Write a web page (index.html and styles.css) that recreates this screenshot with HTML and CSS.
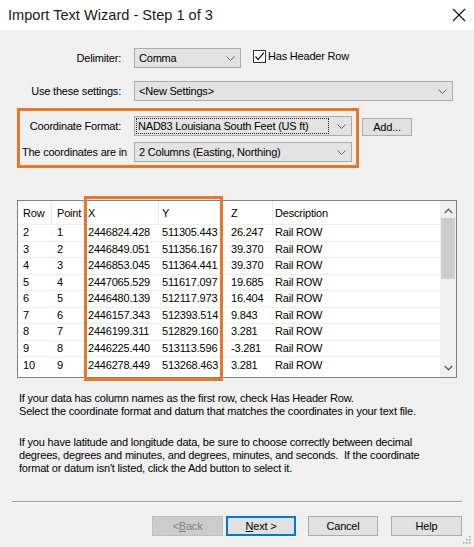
FILE: index.html
```html
<!DOCTYPE html>
<html>
<head>
<meta charset="utf-8">
<link rel="stylesheet" href="styles.css">
</head>
<body>
<div class="window">
  <div class="titlebar">
    <span class="title">Import Text Wizard - Step 1 of 3</span>
    <svg class="close" width="14" height="14" viewBox="0 0 14 14"><path d="M1 1 L13 13 M13 1 L1 13" stroke="#111" stroke-width="1.1" fill="none"/></svg>
  </div>
  <div class="content">
    <div class="row r-delim">
      <span class="lbl">Delimiter:</span>
      <div class="combo w-delim"><span class="ctext">Comma</span><svg class="chev" width="9" height="5" viewBox="0 0 9 5"><path d="M0.5 0.5 L4.5 4.5 L8.5 0.5" stroke="#606060" fill="none"/></svg></div>
      <span class="check"><span class="box"><svg width="11" height="11" viewBox="0 0 11 11"><path d="M1.5 5.5 L4.2 8.6 L9.8 1.6" stroke="#111" stroke-width="1.2" fill="none"/></svg></span>Has Header Row</span>
    </div>
    <div class="row r-settings">
      <span class="lbl">Use these settings:</span>
      <div class="combo w-settings"><span class="ctext">&lt;New Settings&gt;</span><svg class="chev" width="9" height="5" viewBox="0 0 9 5"><path d="M0.5 0.5 L4.5 4.5 L8.5 0.5" stroke="#606060" fill="none"/></svg></div>
    </div>
    <div class="coord-group">
      <div class="row">
        <span class="lbl">Coordinate Format:</span>
        <div class="combo w-coord"><span class="ctext focus">NAD83 Louisiana South Feet (US ft)</span><svg class="chev" width="9" height="5" viewBox="0 0 9 5"><path d="M0.5 0.5 L4.5 4.5 L8.5 0.5" stroke="#606060" fill="none"/></svg></div>
        <span class="btn add">Add...</span>
      </div>
      <div class="row r-in">
        <span class="lbl lbl-wide">The coordinates are in</span>
        <div class="combo w-coord w-in"><span class="ctext">2 Columns (Easting, Northing)</span><svg class="chev" width="9" height="5" viewBox="0 0 9 5"><path d="M0.5 0.5 L4.5 4.5 L8.5 0.5" stroke="#606060" fill="none"/></svg></div>
      </div>
      <div class="highlight hl-coord"></div>
    </div>
    <div class="grid-wrap">
      <div class="table">
        <div class="grid">
          <div class="tr th"><span>Row</span><span>Point</span><span>X</span><span>Y</span><span>Z</span><span>Description</span></div>
          <div class="tr"><span>2</span><span>1</span><span>2446824.428</span><span>511305.443</span><span>26.247</span><span>Rail ROW</span></div>
          <div class="tr"><span>3</span><span>2</span><span>2446849.051</span><span>511356.167</span><span>39.370</span><span>Rail ROW</span></div>
          <div class="tr"><span>4</span><span>3</span><span>2446853.045</span><span>511364.441</span><span>39.370</span><span>Rail ROW</span></div>
          <div class="tr"><span>5</span><span>4</span><span>2447065.529</span><span>511617.097</span><span>19.685</span><span>Rail ROW</span></div>
          <div class="tr"><span>6</span><span>5</span><span>2446480.139</span><span>512117.973</span><span>16.404</span><span>Rail ROW</span></div>
          <div class="tr"><span>7</span><span>6</span><span>2446157.343</span><span>512393.514</span><span>9.843</span><span>Rail ROW</span></div>
          <div class="tr"><span>8</span><span>7</span><span>2446199.311</span><span>512829.160</span><span>3.281</span><span>Rail ROW</span></div>
          <div class="tr"><span>9</span><span>8</span><span>2446225.440</span><span>513113.596</span><span>-3.281</span><span>Rail ROW</span></div>
          <div class="tr last"><span>10</span><span>9</span><span>2446278.449</span><span>513268.463</span><span>3.281</span><span>Rail ROW</span></div>
        </div>
        <div class="scrollbar">
          <svg class="sarrow" width="9" height="6" viewBox="0 0 9 6"><path d="M0.8 5 L4.5 1.2 L8.2 5" stroke="#606060" stroke-width="1.3" fill="none"/></svg>
          <div class="track"><div class="thumb"></div></div>
          <svg class="sarrow" width="9" height="6" viewBox="0 0 9 6"><path d="M0.8 1 L4.5 4.8 L8.2 1" stroke="#606060" stroke-width="1.3" fill="none"/></svg>
        </div>
      </div>
      <div class="highlight hl-xy"></div>
    </div>
    <p class="help p1">If your data has column names as the first row, check Has Header Row.<br>Select the coordinate format and datum that matches the coordinates in your text file.</p>
    <p class="help p2">If you have latitude and longitude data, be sure to choose correctly between decimal<br>degrees, degrees and minutes, and degrees, minutes, and seconds.&nbsp; If the coordinate<br>format or datum isn't listed, click the Add button to select it.</p>
  </div>
  <div class="footer">
    <div class="sep"></div>
    <div class="buttons">
      <span class="btn disabled">&lt; <u>B</u>ack</span>
      <span class="btn default"><u>N</u>ext &gt;</span>
      <span class="btn cancel">Cancel</span>
      <span class="btn">Help</span>
    </div>
    <svg class="grip" width="8" height="8" viewBox="0 0 8 8"><g fill="#a0a0a0"><rect x="6" y="0" width="1.5" height="1.5"/><rect x="3" y="3" width="1.5" height="1.5"/><rect x="6" y="3" width="1.5" height="1.5"/><rect x="0" y="6" width="1.5" height="1.5"/><rect x="3" y="6" width="1.5" height="1.5"/><rect x="6" y="6" width="1.5" height="1.5"/></g></svg>
  </div>
</div>
</body>
</html>
```

FILE: styles.css
```css
html, body {
  margin: 0;
  padding: 0;
}
body {
  background: #f0f0f0;
  font-family: "Liberation Sans", Arial, sans-serif;
  font-size: 11px;
  letter-spacing: -0.2px;
  color: #000;
}
.window {
  width: 474px;
  height: 547px;
  display: flex;
  flex-direction: column;
  position: relative;
  overflow: hidden;
}
.titlebar {
  height: 30px;
  background: #fff;
  display: flex;
  align-items: center;
  justify-content: space-between;
  padding: 0 8px 0 8px;
  flex: none;
}
.title {
  font-size: 14.6px;
  letter-spacing: 0;
  color: #1a1a1a;
  margin-top: -1px;
}
.close {
  margin-right: 0;
}
.content {
  flex: 1;
  padding-top: 18px;
}
.row {
  display: flex;
  align-items: center;
  height: 20px;
}
.lbl {
  width: 121px;
  text-align: right;
  flex: none;
  white-space: nowrap;
}
.lbl-wide {
  width: 127px;
}
.combo {
  margin-left: 13px;
  height: 20px;
  box-sizing: border-box;
  border: 1px solid #adadad;
  background: #e3e3e3;
  display: flex;
  align-items: center;
  justify-content: space-between;
  padding: 0 5px 0 4px;
  flex: none;
}
.ctext {
  white-space: nowrap;
}
.w-delim { width: 107px; }
.w-settings { width: 319px; }
.w-coord { width: 218px; padding-left: 1px; }
.w-in { margin-left: 7px; padding-left: 4px; }
.focus {
  border: 1px dotted #222;
  width: 193px;
  height: 16px;
  box-sizing: border-box;
  line-height: 14px;
  padding-left: 1px;
}
.check {
  display: flex;
  align-items: center;
  margin-left: 12px;
  margin-top: -4px;
}
.box {
  width: 13px;
  height: 13px;
  box-sizing: border-box;
  border: 1px solid #333;
  background: #fff;
  display: flex;
  align-items: center;
  justify-content: center;
  margin-right: 2px;
}
.r-settings { margin-top: 13px; }
.coord-group {
  position: relative;
  margin-top: 15px;
}
.r-in { margin-top: 6px; }
.btn {
  height: 20px;
  box-sizing: border-box;
  border: 1px solid #adadad;
  background: #e1e1e1;
  display: flex;
  align-items: center;
  justify-content: center;
  width: 71px;
  flex: none;
}
.add {
  width: 50px;
  height: 18px;
  margin-left: 10px;
  margin-top: 2px;
}
.highlight {
  position: absolute;
  box-sizing: border-box;
  border: 3px solid #e8772e;
  pointer-events: none;
}
.hl-coord {
  left: 17px;
  top: -8px;
  width: 342px;
  height: 60px;
}
.grid-wrap {
  position: relative;
  margin: 38px 0 0 17px;
  width: 440px;
}
.table {
  display: flex;
  height: 178px;
  box-sizing: border-box;
  border: 1px solid #828282;
  background: #fff;
}
.grid {
  width: 422px;
  flex: none;
}
.tr {
  display: grid;
  grid-template-columns: 34px 32px 75px 67px 47px 167px;
  height: 16.5px;
  box-sizing: border-box;
  border-bottom: 1px solid #efefef;
  align-items: center;
}
.tr span {
  padding-left: 5px;
  white-space: nowrap;
  line-height: 15px;
}
.tr span:nth-child(3) { padding-left: 4px; }
.tr span:nth-child(4) { padding-left: 3px; }
.tr span:nth-child(6) { padding-left: 2px; }
.th {
  height: 24px;
  align-items: stretch;
}
.th span {
  display: flex;
  align-items: center;
  border-right: 1px solid #e8e8e8;
  line-height: normal;
}
.th span:nth-child(4), .th span:nth-child(6) {
  border-right: none;
}
.tr.last { border-bottom: none; }
.scrollbar {
  width: 16px;
  flex: none;
  background: #f0f0f0;
  display: flex;
  flex-direction: column;
  align-items: center;
}
.sarrow {
  flex: none;
  margin: 7px 0 4px;
}
.sarrow:last-child {
  margin: 4px 0 6px;
}
.track {
  flex: 1;
  width: 100%;
  padding-top: 0px;
}
.thumb {
  margin: 0 1px;
  height: 61px;
  background: #cdcdcd;
}
.hl-xy {
  left: 67px;
  top: -4px;
  width: 139px;
  height: 185px;
}
.help {
  margin: 0 0 0 19px;
  line-height: 13px;
  white-space: nowrap;
}
.p1 { margin-top: 14px; }
.p2 { margin-top: 18px; }
.footer {
  flex: none;
  height: 46px;
  position: relative;
}
.sep {
  margin: 0 12px;
  height: 1px;
  background: #a0a0a0;
  border-bottom: 1px solid #fff;
}
.buttons {
  display: flex;
  justify-content: flex-end;
  margin: 13px 12px 0 0;
}
.btn.disabled {
  background: #cccccc;
  border-color: #bfbfbf;
  color: #838383;
}
.btn.default {
  width: 70px;
  margin-left: 3px;
  border-color: #0078d7;
  box-shadow: inset 0 0 0 1px #0078d7;
}
.btn.cancel {
  width: 70px;
  margin-left: 12px;
  margin-right: 13px;
}
.grip {
  position: absolute;
  right: 3px;
  bottom: 3px;
}
```
